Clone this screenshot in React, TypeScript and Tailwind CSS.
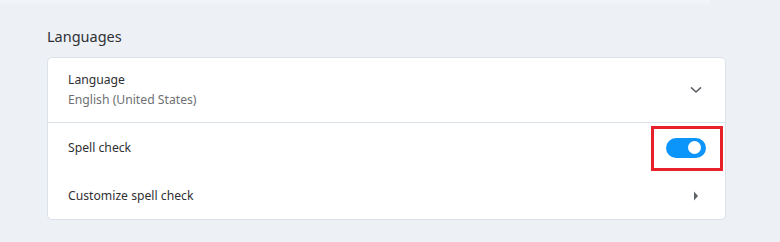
function ChevronDown() {
	return (
		<svg width="12" height="8" viewBox="0 0 12 8" fill="none">
			<path d="M1.5 1.8 L6 6 L10.5 1.8" stroke="#5f6368" strokeWidth="1.6" strokeLinecap="round" strokeLinejoin="round" />
		</svg>
	)
}

function CaretRight() {
	return (
		<svg width="6" height="10" viewBox="0 0 6 10">
			<path d="M1 0.5 L5 5 L1 9.5 Z" fill="#5f6368" />
		</svg>
	)
}

function Toggle() {
	return (
		<div className="flex h-[20px] w-[40px] items-center justify-end rounded-full bg-[#0b95fb] pr-[5px]">
			<div className="h-[13px] w-[13px] rounded-full bg-white" />
		</div>
	)
}

export default function App() {
	return (
		<div
			className="relative h-[242px] w-full overflow-hidden bg-[#edf1f6] pl-[47px] pt-[26px]"
			style={{ fontFamily: '"Noto Sans", "Open Sans", Arial, sans-serif' }}
		>
			<div className="absolute left-0 top-0 h-[6px] w-[710px] bg-gradient-to-b from-[#f2f5f9] to-[#edf1f6]" />
			<h2 className="relative text-[14.5px] leading-[20px] text-[#2f3033]">Languages</h2>
			<div className="mt-[11px] w-[679px] rounded-[5px] border border-[#dbe2ea] bg-white">
				<div className="flex h-[65px] items-center justify-between border-b border-[#dbe2ea] pl-[20px] pr-[19px]">
					<div className="flex flex-col">
						<span className="text-[12.2px] leading-[20px] text-[#2f3033]">Language</span>
						<span className="text-[12.2px] leading-[20px] text-[#6e7073]">English (United States)</span>
					</div>
					<div className="flex w-[20px] justify-center">
						<ChevronDown />
					</div>
				</div>
				<div className="flex h-[49px] items-center justify-between pl-[20px] pr-[19px]">
					<span className="text-[12.2px] leading-[20px] text-[#2f3033]">Spell check</span>
					<Toggle />
				</div>
				<div className="flex h-[47px] items-center justify-between pl-[20px] pr-[19px]">
					<span className="text-[12.2px] leading-[20px] text-[#2f3033]">Customize spell check</span>
					<div className="flex w-[20px] justify-center">
						<CaretRight />
					</div>
				</div>
			</div>
			<div className="absolute left-[651px] top-[126px] h-[45px] w-[72px] border-[3px] border-[#e8202a]" />
		</div>
	)
}
